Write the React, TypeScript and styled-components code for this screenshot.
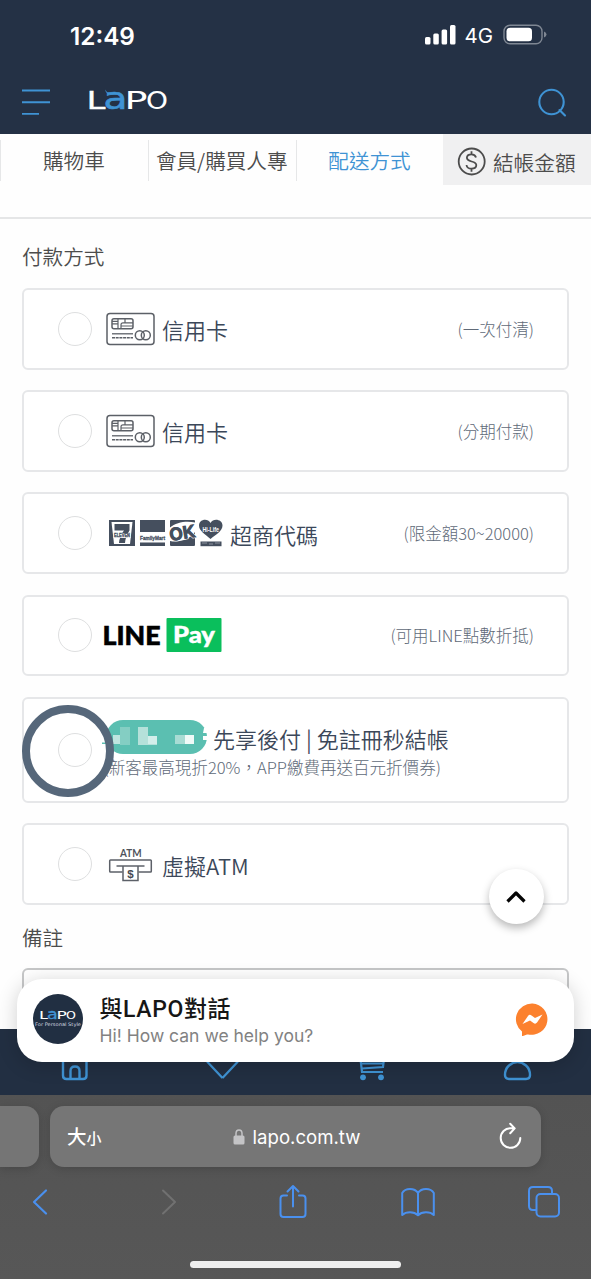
import React from "react";
import styled, { createGlobalStyle } from "styled-components";

const cjk = `"Noto Sans CJK TC", "Noto Sans", sans-serif`;
const ui = `Inter, "Liberation Sans", "Noto Sans CJK TC", sans-serif`;
const navy = "#243145";
const blue = "#3f93d4";

const GlobalStyle = createGlobalStyle`
  *, *::before, *::after { box-sizing: border-box; }
  body { margin: 0; background: #fff; font-family: ${cjk}; }
  svg { overflow: visible; flex: none; }
`;

const Phone = styled.div`
  position: relative;
  width: 591px;
  height: 1279px;
  overflow: hidden;
  display: flex;
  flex-direction: column;
  background: #fefefe;
`;

const Header = styled.header`
  height: 134px;
  flex: none;
  background: ${navy};
`;

const StatusBar = styled.div`
  height: 70px;
  display: flex;
  align-items: center;
  justify-content: space-between;
  padding: 0 44px 0 70px;
  color: #fff;
  font-family: ${ui};
`;

const Time = styled.span`
  font-size: 24.3px;
  font-weight: 600;
  line-height: 30px;
  padding-top: 2px;
`;

const StatusIcons = styled.div`
  display: flex;
  align-items: center;
`;

const Network = styled.span`
  font-size: 20.5px;
  font-weight: 400;
  line-height: 24px;
  margin: 2px 10px 0 9px;
`;

const SiteBar = styled.div`
  height: 64px;
  display: flex;
  align-items: center;
  padding: 1px 24px 0 22px;
`;

const LogoSlot = styled.div`
  display: flex;
  flex: 1;
  padding: 0 0 7px 37px;
`;

const Tabs = styled.nav`
  height: 85px;
  flex: none;
  display: flex;
  align-items: flex-start;
  border-bottom: 2px solid #e5e6e7;
`;

const Tab = styled.div<{ $active?: boolean }>`
  width: 147.8px;
  height: 41px;
  margin-top: 6px;
  padding: 0 1px 2px 0;
  display: flex;
  align-items: center;
  justify-content: center;
  border-left: 1px solid #e6e7e8;
  color: ${(p) => (p.$active ? blue : "#4c4c4c")};
  font-size: 20.6px;
  font-weight: 350;
  line-height: 30px;
  white-space: nowrap;
`;

const TotalTab = styled.div`
  flex: 1;
  height: 51px;
  display: flex;
  align-items: center;
  gap: 6.5px;
  padding: 4px 0 0 14px;
  background: #f0f0f1;
  color: #4c4c4c;
  font-size: 20.7px;
  font-weight: 350;
  line-height: 30px;
  white-space: nowrap;
`;

const Content = styled.main`
  flex: none;
  height: 810px;
  padding: 0 22px;
  overflow: hidden;
`;

const SectionTitle = styled.h2<{ $height: number }>`
  margin: 0;
  height: ${(p) => p.$height}px;
  display: flex;
  align-items: center;
  color: #4c4c4c;
  font-size: 20.6px;
  font-weight: 350;
`;

const Methods = styled.div`
  display: flex;
  flex-direction: column;
  gap: 20.7px;
  margin-top: -5px;
`;

const Method = styled.div<{ $height?: number }>`
  height: ${(p) => p.$height ?? 81.5}px;
  border: 2px solid #e6e7e9;
  border-radius: 6px;
  background: #fff;
  display: flex;
  align-items: center;
  padding: 0 33px 0 34px;
`;

const Radio = styled.span`
  flex: none;
  width: 34px;
  height: 34px;
  border: 1.5px solid #dedfe0;
  border-radius: 50%;
  background: #fff;
`;

const Mark = styled.span<{ $left: number; $gap?: number }>`
  display: flex;
  flex: none;
  margin-left: ${(p) => p.$left}px;
  margin-right: ${(p) => p.$gap ?? 7}px;
`;

const Name = styled.span`
  color: #3b4759;
  font-size: 22px;
  font-weight: 350;
  line-height: 32px;
  padding-top: 1px;
  white-space: nowrap;
`;

const Note = styled.span`
  margin-left: auto;
  color: #606a78;
  font-size: 16.5px;
  font-weight: 300;
  line-height: 24px;
  white-space: nowrap;
`;

const LaterBody = styled.div`
  flex: 1;
  margin-left: 10px;
`;

const LaterTop = styled.div`
  display: flex;
  align-items: center;
  height: 36px;
`;

const LaterNote = styled.div`
  padding-left: 1.5px;
  padding-bottom: 1px;
  color: #606a78;
  font-size: 16.55px;
  font-weight: 300;
  line-height: 24px;
  white-space: nowrap;
`;

const Remark = styled.div`
  height: 90px;
  border: 2px solid #c6c7c8;
  border-radius: 6px;
  background: #fff;
`;

const Highlight = styled.div`
  position: absolute;
  left: 22px;
  top: 705px;
  width: 92px;
  height: 92px;
  border: 8px solid #56677a;
  border-radius: 50%;
`;

const TopButton = styled.div`
  position: absolute;
  left: 489px;
  top: 869px;
  width: 55px;
  height: 55px;
  border-radius: 50%;
  background: #fff;
  box-shadow: 0 4px 8px rgba(0, 0, 0, 0.28);
  display: flex;
  align-items: center;
  justify-content: center;
  padding-right: 1px;
`;

const BottomNav = styled.nav`
  height: 66px;
  flex: none;
  background: #222f42;
  display: flex;
  justify-content: space-between;
  align-items: flex-start;
  padding: 24px 57px 0 59px;
`;

const Chat = styled.section`
  position: absolute;
  left: 17px;
  top: 979px;
  width: 557px;
  height: 83px;
  border-radius: 25px;
  background: #fff;
  box-shadow: 0 3px 20px rgba(0, 0, 0, 0.19);
  display: flex;
  align-items: center;
  padding: 0 25px 2px 16px;
  font-family: ${ui};
`;

const Avatar = styled.div`
  width: 50px;
  height: 50px;
  margin-bottom: 2px;
  border-radius: 50%;
  background: #212f42;
  display: flex;
  flex-direction: column;
  align-items: center;
  justify-content: center;
  gap: 1px;
`;

const ChatText = styled.div`
  flex: 1;
  margin-left: 16.5px;
  padding-top: 5px;
`;

const ChatTitle = styled.div`
  color: #161616;
  font-family: Roboto, "Noto Sans CJK TC", sans-serif;
  font-size: 23px;
  font-weight: 500;
  line-height: 26px;
  letter-spacing: 0.6px;
  white-space: nowrap;
`;

const ChatHint = styled.div`
  color: #828282;
  font-size: 17.5px;
  line-height: 25px;
  white-space: nowrap;
`;

const Safari = styled.footer`
  flex: none;
  height: 184px;
  background: linear-gradient(#535353, #575757);
  font-family: ${ui};
  display: flex;
  flex-direction: column;
  align-items: center;
`;

const AddressRow = styled.div`
  align-self: stretch;
  display: flex;
  gap: 11px;
  padding-top: 11px;
`;

const PreviousTab = styled.div`
  width: 39px;
  height: 61px;
  background: #757575;
  border-radius: 0 14px 14px 0;
  box-shadow: 0 2px 10px rgba(0, 0, 0, 0.16);
`;

const Address = styled.div`
  width: 491px;
  height: 61px;
  padding: 0 18px 0 17px;
  display: flex;
  align-items: center;
  justify-content: space-between;
  background: #767676;
  border-radius: 14px;
  box-shadow: 0 2px 10px rgba(0, 0, 0, 0.16);
  color: #fff;
`;

const TextSize = styled.span`
  width: 38px;
  font-family: ${cjk};
  font-size: 19.5px;
  font-weight: 500;
  line-height: 26px;
  white-space: nowrap;
  small { font-size: 15px; }
`;

const Url = styled.span`
  display: flex;
  align-items: center;
  gap: 8px;
  margin-right: 11px;
  font-size: 18.6px;
`;

const Tools = styled.div`
  align-self: stretch;
  display: grid;
  grid-template-columns: 80px 178px 70px 180px 72px;
  justify-items: center;
  align-items: center;
  height: 69px;
`;

const HomeIndicator = styled.div`
  width: 211px;
  height: 7px;
  margin-top: 25px;
  border-radius: 4px;
  background: #efefef;
`;

function Wordmark({ width, height }: { width: number; height: number }) {
  return (
    <svg width={width} height={height} viewBox="0 0 80 22" fontFamily="DejaVu Sans, sans-serif" fill="#fff">
      <text x="-1.500" y="20.500" fontSize="24.500" textLength="19" lengthAdjust="spacingAndGlyphs" stroke="#fff" strokeWidth=".3">L</text>
      <text x="15.500" y="20.500" fontSize="30" textLength="24" lengthAdjust="spacingAndGlyphs" fill={blue} stroke={blue} strokeWidth=".6">a</text>
      <path d="M17 1.500q1.500 3 4.500 3.500h9q3 .5 4 3-3-1.500-6-1.500h-6q-4.500-.5-5.500-5z" fill={blue} />
      <text x="36.500" y="20.500" fontSize="24.500" textLength="23" lengthAdjust="spacingAndGlyphs">P</text>
      <text x="58" y="20.500" fontSize="24.500" textLength="22" lengthAdjust="spacingAndGlyphs">O</text>
    </svg>
  );
}

function CardIcon() {
  return (
    <svg width="49" height="33" viewBox="0 0 49 33" fill="none" stroke="#5c6067" strokeWidth="1.500">
      <rect x="1" y="1.500" width="47" height="31" rx="3" />
      <rect x="6" y="6.800" width="21" height="10" rx="2" />
      <path d="M6 11.800h6M12 6.800v10M12 9.300h-6M15 16.800v-4q0-2 2-2h10M15 14h12M19 6.800v4" strokeWidth="1.200" />
      <path d="M6 21.800h21" strokeWidth="1.300" />
      <path d="M6 25.800h21" strokeDasharray="3 .7" strokeWidth="1.400" />
      <circle cx="33.800" cy="23.300" r="4.500" />
      <circle cx="39.800" cy="23.300" r="4.500" />
    </svg>
  );
}

function StoresIcon() {
  const c = "#454f5e";
  return (
    <svg width="114" height="28" viewBox="0 0 114 28" fill={c} fontFamily="Liberation Sans, sans-serif" fontWeight="700">
      <rect x="0" y="1" width="26" height="26" />
      <path d="M2.500 3h21l-2.500 22H5z" fill="#fff" />
      <path d="M5.500 5h15v6.500q-4 6-4.500 12.500H10q.5-7 5-12.500H5.500z" />
      <rect x="4.500" y="14" width="17" height="5" fill="#fff" />
      <text x="5" y="18.200" fontSize="4.800" textLength="16" lengthAdjust="spacingAndGlyphs" stroke={c} strokeWidth=".3">ELEVEN</text>
      <path d="M31 1h25v12H31zM31 23.500h25V27H31z" />
      <text x="31" y="20.500" fontSize="6" textLength="25" lengthAdjust="spacingAndGlyphs" stroke={c} strokeWidth=".3">FamilyMart</text>
      <path d="M62 1h23q1 0 1 1v1.500C78 1.500 67 3 61 8.500V2q0-1 1-1z" />
      <path d="M61 22c10 2 20-2 25-9v13q0 1-1 1H62q-1 0-1-1z" />
      <text x="60.500" y="20" fontSize="18" textLength="25.500" lengthAdjust="spacingAndGlyphs" stroke="#fff" strokeWidth="2.200" paintOrder="stroke" transform="rotate(-9 73 14)">OK</text>
      <text x="60.500" y="20" fontSize="18" textLength="25.500" lengthAdjust="spacingAndGlyphs" stroke={c} strokeWidth=".9" transform="rotate(-9 73 14)" aria-hidden="true">OK</text>
      <path d="M101.500 20C96 15 90 12 90 6.500c0-6 8.500-8 11.500-2.500 3-5.500 12-3.500 12 2.500 0 5.500-6.500 9-12 13.500z" />
      <text x="93.500" y="12.500" fontSize="7" fill="#fff" textLength="16.500" lengthAdjust="spacingAndGlyphs">Hi-Life</text>
      <rect x="91.500" y="22.500" width="21" height="4.700" />
      <path d="M93 24h5M100 25h4M106 24h5" stroke="#aab0b7" strokeWidth=".7" />
    </svg>
  );
}

function LinePayLogo() {
  return (
    <svg width="119" height="36" viewBox="0 0 119 36" fontFamily="Lato, sans-serif" fontWeight="900">
      <text x="-.5" y="27.500" fontSize="27" textLength="58" lengthAdjust="spacingAndGlyphs" fill="#000" stroke="#000" strokeWidth=".6">LINE</text>
      <rect x="63.500" y="1" width="55" height="34" rx="1" fill="#0abf5c" />
      <text x="70" y="25.500" fontSize="22.500" textLength="42" lengthAdjust="spacingAndGlyphs" fill="#fff" stroke="#fff" strokeWidth=".4">Pay</text>
    </svg>
  );
}

function MaskedBadge() {
  return (
    <svg width="106" height="36" viewBox="0 0 106 36">
      <rect x="4" y="1" width="101" height="34" rx="17" fill="#5bbfb1" />
      <path d="M0 23.500h9v1.500H0z" fill="#5bbfb1" />
      <rect x="11" y="16" width="8" height="9" fill="#bfe5df" />
      <rect x="18" y="8" width="10" height="18" fill="#84cec3" />
      <path d="M36 8h10v9h9v9H36z" fill="#b5e1da" />
      <rect x="46" y="17" width="9" height="8" fill="#d3eeea" />
      <rect x="73" y="16" width="10" height="9" fill="#a8dcd4" />
      <rect x="83" y="16" width="9" height="9" fill="#f0faf8" />
      <path d="M102 9h4v5h-5zM101 17h5v4h-5z" fill="#fff" />
    </svg>
  );
}

function AtmIcon() {
  return (
    <svg width="45" height="34" viewBox="0 0 45 34" fill="none" stroke="#5c6068" strokeWidth="1.500">
      <text x="11" y="9.500" fontFamily="Lato, sans-serif" fontSize="11" fontWeight="700" fill="#4f545c" stroke="none" textLength="21.500" lengthAdjust="spacingAndGlyphs">ATM</text>
      <path d="M13.500 25H1.500q-.8 0-.8-.8V13.800q0-.8.8-.8h40q.8 0 .8.800v10.400q0 .8-.8.800H29.500" />
      <path d="M7.500 19h28" />
      <path d="M14 19v14.500h15V19" />
      <text x="18.200" y="30.500" fontFamily="Liberation Sans, sans-serif" fontSize="11.500" fontWeight="700" fill="#454a53" stroke="none">$</text>
    </svg>
  );
}

export default function App() {
  return (
    <Phone>
      <GlobalStyle />
      <Header>
        <StatusBar>
          <Time>12:49</Time>
          <StatusIcons>
            <svg width="31" height="20" viewBox="0 0 31 20" fill="#fff">
              <rect x="1" y="12" width="5.500" height="7.500" rx="1.500" />
              <rect x="9.300" y="8.500" width="5.500" height="11" rx="1.500" />
              <rect x="17.600" y="4.500" width="5.500" height="15" rx="1.500" />
              <rect x="26" y="0" width="5.500" height="19.500" rx="1.500" />
            </svg>
            <Network>4G</Network>
            <svg width="44" height="20" viewBox="0 0 44 20">
              <rect x="1" y=".3" width="38" height="18.400" rx="6" fill="none" stroke="#7f8793" strokeWidth="1.400" />
              <rect x="3.500" y="2.800" width="25.500" height="13.500" rx="3.500" fill="#fff" />
              <path d="M41 6.500q2.500 1 2.500 3t-2.500 3z" fill="#7f8793" />
            </svg>
          </StatusIcons>
        </StatusBar>
        <SiteBar>
          <svg width="29" height="28" viewBox="0 0 29 28" stroke={blue} strokeWidth="1.900">
            <path d="M0 1.500h28M0 13.200h28M0 24.900h17" />
          </svg>
          <LogoSlot>
            <Wordmark width={80} height={22} />
          </LogoSlot>
          <svg width="30" height="30" viewBox="0 0 30 30" fill="none" stroke={blue} strokeWidth="2.100">
            <circle cx="14.500" cy="14" r="12.200" />
            <path d="M22.500 22l5.500 5.500" strokeLinecap="round" />
          </svg>
        </SiteBar>
      </Header>

      <Tabs>
        <Tab>購物車</Tab>
        <Tab>會員/購買人專</Tab>
        <Tab $active>配送方式</Tab>
        <TotalTab>
          <svg width="29" height="29" viewBox="0 0 29 29" fill="none" stroke="#4c4c4c" strokeWidth="1.800">
            <circle cx="14.700" cy="14.500" r="13" />
            <path d="M19 10.500C18.500 8.400 17 7.300 14.500 7.300c-2.800 0-4.600 1.300-4.600 3.500 0 4.900 9.400 2.500 9.400 7.300 0 2.300-2 3.600-4.800 3.600-2.900 0-4.700-1.300-5-3.700M14.500 4.300v3M14.500 21.700v3" />
          </svg>
          結帳金額
        </TotalTab>
      </Tabs>

      <Content>
        <SectionTitle $height={74}>付款方式</SectionTitle>
        <Methods>
          <Method>
            <Radio />
            <Mark $left={14}><CardIcon /></Mark>
            <Name>信用卡</Name>
            <Note>(一次付清)</Note>
          </Method>
          <Method>
            <Radio />
            <Mark $left={14}><CardIcon /></Mark>
            <Name>信用卡</Name>
            <Note>(分期付款)</Note>
          </Method>
          <Method>
            <Radio />
            <Mark $left={17}><StoresIcon /></Mark>
            <Name>超商代碼</Name>
            <Note>(限金額30~20000)</Note>
          </Method>
          <Method>
            <Radio />
            <Mark $left={10.5}><LinePayLogo /></Mark>
            <Note>(可用LINE點數折抵)</Note>
          </Method>
          <Method $height={106}>
            <Radio />
            <LaterBody>
              <LaterTop>
                <Mark $left={0} $gap={5}><MaskedBadge /></Mark>
                <Name>先享後付 | 免註冊秒結帳</Name>
              </LaterTop>
              <LaterNote>(新客最高現折20%，APP繳費再送百元折價券)</LaterNote>
            </LaterBody>
          </Method>
          <Method>
            <Radio />
            <Mark $left={17} $gap={8}><AtmIcon /></Mark>
            <Name>虛擬ATM</Name>
          </Method>
        </Methods>
        <SectionTitle $height={63.5}>備註</SectionTitle>
        <Remark />
      </Content>

      <BottomNav>
        <svg width="32" height="30" viewBox="0 0 32 30" fill="none" stroke={blue} strokeWidth="2.400">
          <path d="M4 4v18.500q0 3.500 3.500 3.500h16.500q3.500 0 3.500-3.500V4M11.500 26v-8q0-4.500 4.500-4.500t4.500 4.500v8" />
        </svg>
        <svg width="36" height="30" viewBox="0 0 36 30" fill="none" stroke={blue} strokeWidth="2.200">
          <path d="M17.500 25L2.500 9Q0 4 5 1M17.500 25L32.500 9q3-5-2-8" strokeLinejoin="round" />
        </svg>
        <svg width="32" height="30" viewBox="0 0 32 30" fill="none" stroke={blue} strokeWidth="2.200">
          <path d="M4 2l2 17h21M28 6l-1 8-21 1.500M6 10.500h22" />
          <circle cx="7" cy="24.300" r="2.900" fill={blue} stroke="none" />
          <circle cx="25" cy="24.300" r="2.900" fill={blue} stroke="none" />
        </svg>
        <svg width="32" height="30" viewBox="0 0 32 30" fill="none" stroke={blue} strokeWidth="2.400">
          <path d="M7 26q-4 0-4-4 0-6 4-9.500 4-3.500 8.500-3.500t8.500 3.500q4 3.500 4 9.500 0 4-4 4z" />
        </svg>
      </BottomNav>

      <Safari>
        <AddressRow>
          <PreviousTab />
          <Address>
            <TextSize>大<small>小</small></TextSize>
            <Url>
              <svg width="12" height="16" viewBox="0 0 12 16">
                <rect x=".5" y="6.500" width="11" height="9" rx="1.500" fill="#c4c4c6" />
                <path d="M3 7V4.500q0-3.500 3-3.500t3 3.500V7" fill="none" stroke="#c4c4c6" strokeWidth="1.500" />
              </svg>
              lapo.com.tw
            </Url>
            <svg width="24" height="28" viewBox="0 0 24 28" fill="none" stroke="#fff" strokeWidth="2" strokeLinecap="round" strokeLinejoin="round">
              <path d="M15 5.200H11.500A9.800 9.800 0 1 0 21.300 15M11.200.800L15.700 5.400l-4.500 4.800" />
            </svg>
          </Address>
        </AddressRow>
        <Tools>
          <svg width="18" height="28" viewBox="0 0 18 28" fill="none" stroke="#4a90ee" strokeWidth="2.200" strokeLinecap="round" strokeLinejoin="round">
            <path d="M15 2.500L3 14l12 11.500" />
          </svg>
          <svg width="18" height="28" viewBox="0 0 18 28" fill="none" stroke="#717171" strokeWidth="2" strokeLinecap="round" strokeLinejoin="round">
            <path d="M3 2.500L15 14 3 25.500" />
          </svg>
          <svg width="28" height="34" viewBox="0 0 28 34" fill="none" stroke="#4a90ee" strokeWidth="2" strokeLinecap="round" strokeLinejoin="round">
            <path d="M8 10.500H4.500q-3 0-3 3v15.500q0 3 3 3h19q3 0 3-3V13.500q0-3-3-3H20M14 21.500V1M8.500 6.500L14 1l5.500 5.500" />
          </svg>
          <svg width="34" height="28" viewBox="0 0 34 28" fill="none" stroke="#4a90ee" strokeWidth="2" strokeLinejoin="round">
            <path d="M17 5Q14.500 1 9 1T1.200 5v22q3-2.700 7.800-2.700t8 3q3-3 8-3t7.800 2.700V5q-2.300-4-7.800-4T17 5zM17 5v22" />
          </svg>
          <svg width="32" height="32" viewBox="0 0 32 32" fill="none" stroke="#4a90ee" strokeWidth="2">
            <path d="M8.500 24H5q-4 0-4-4V5q0-4 4-4h15q4 0 4 4v3" />
            <rect x="8.500" y="8" width="22.500" height="22.500" rx="4" />
          </svg>
        </Tools>
        <HomeIndicator />
      </Safari>

      <Highlight />
      <TopButton>
        <svg width="20" height="14" viewBox="0 0 20 14" fill="none" stroke="#050505" strokeWidth="3.200">
          <path d="M1.500 11.500L10 3l8.500 8.500" strokeLinejoin="round" />
        </svg>
      </TopButton>

      <Chat>
        <Avatar>
          <Wordmark width={36} height={10} />
          <svg width="48" height="7" viewBox="0 0 48 7">
            <text x="1" y="5" fontFamily="DejaVu Sans, sans-serif" fontSize="4.800" textLength="46" lengthAdjust="spacingAndGlyphs" fill="#d6dae0">For Personal Style</text>
          </svg>
        </Avatar>
        <ChatText>
          <ChatTitle>與LAPO對話</ChatTitle>
          <ChatHint>Hi! How can we help you?</ChatHint>
        </ChatText>
        <svg width="33" height="34" viewBox="0 0 33 34">
          <path d="M16.500.5a16 15.700 0 1 1-4.500 31q-1.500-.3-3 .7-1.500 1-3 .8v-4.500A16 15.700 0 0 1 16.500.5z" fill="#fc812e" />
          <path d="M6.500 21l5.500-8q1.500-2 3.500-.5l3.500 2.500 7.500-3.500-5.500 8q-1.500 2-3.500.500l-3.500-2.500z" fill="#fff" />
        </svg>
      </Chat>
    </Phone>
  );
}
